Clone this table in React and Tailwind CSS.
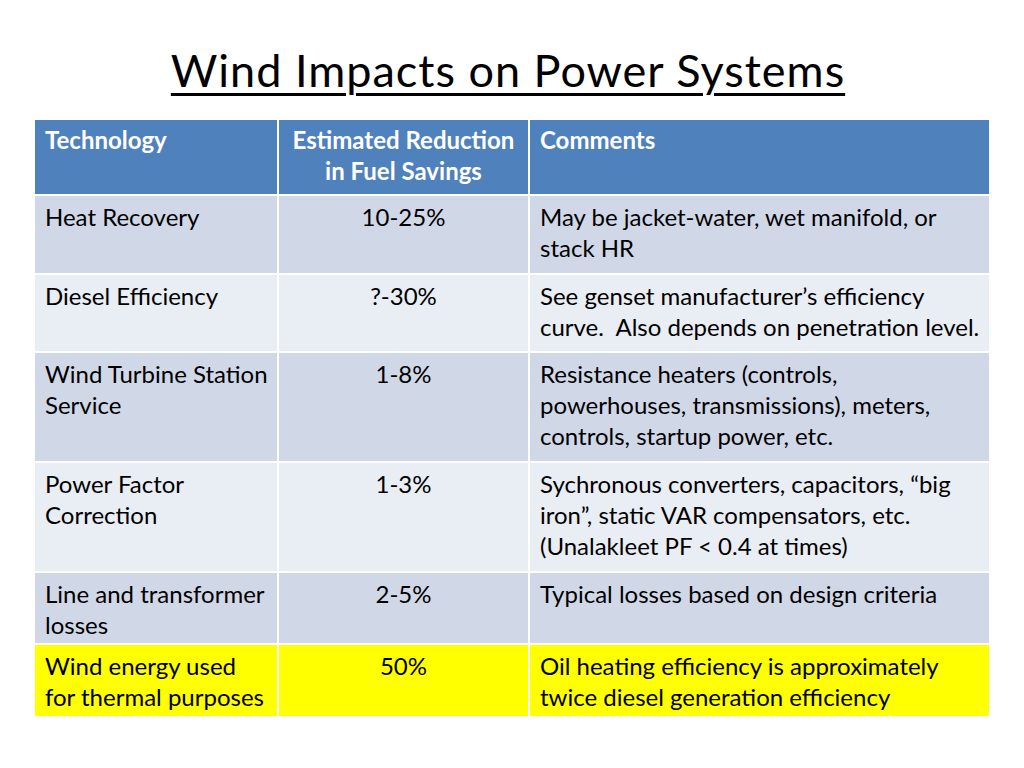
const rows = [
  {
    bg: 'bg-[#d0d8e8]',
    tech: ['Heat Recovery'],
    pct: '10-25%',
    note: ['May be jacket-water, wet manifold, or', 'stack HR'],
  },
  {
    bg: 'bg-[#e9edf4]',
    tech: ['Diesel Efficiency'],
    pct: '?-30%',
    note: ['See genset manufacturer’s efficiency', 'curve.\u00a0 Also depends on penetration level.'],
  },
  {
    bg: 'bg-[#d0d8e8]',
    tech: ['Wind Turbine Station', 'Service'],
    pct: '1-8%',
    note: ['Resistance heaters (controls,', 'powerhouses, transmissions), meters,', 'controls, startup power, etc.'],
  },
  {
    bg: 'bg-[#e9edf4]',
    tech: ['Power Factor', 'Correction'],
    pct: '1-3%',
    note: ['Sychronous converters, capacitors, “big', 'iron”, static VAR compensators, etc.', '(Unalakleet PF < 0.4 at times)'],
  },
  {
    bg: 'bg-[#d0d8e8]',
    tech: ['Line and transformer', 'losses'],
    pct: '2-5%',
    note: ['Typical losses based on design criteria'],
  },
  {
    bg: 'bg-[#ffff00]',
    tech: ['Wind energy used', 'for thermal purposes'],
    pct: '50%',
    note: ['Oil heating efficiency is approximately', 'twice diesel generation efficiency'],
  },
];

const Lines = ({ lines }) => (
  <>
    {lines.map((l) => (
      <div key={l} className="whitespace-nowrap">
        {l}
      </div>
    ))}
  </>
);

const App = () => {
  return (
    <div className="w-[1024px] h-[768px] bg-white font-['Lato',sans-serif] text-black overflow-hidden">
      {/* Title */}
      <div className="h-[120px] pt-[43px] pr-[8px] text-center">
        <h1 className="text-[45px] leading-[54px] tracking-[1px] underline decoration-[3px] underline-offset-[6px]">
          Wind Impacts on Power Systems
        </h1>
      </div>

      {/* Table */}
      <div className="ml-[35px] w-[954px] grid grid-cols-[242px_249px_459px] grid-rows-[74px_77px_76px_108px_108px_70px_71px] gap-[2px] text-[24px] leading-[31px]">
        <div className="bg-[#4f81bd] text-white font-bold px-[10px] pt-[4px]">Technology</div>
        <div className="bg-[#4f81bd] text-white font-bold px-[10px] pt-[4px] text-center">
          <Lines lines={['Estimated Reduction', 'in Fuel Savings']} />
        </div>
        <div className="bg-[#4f81bd] text-white font-bold px-[10px] pt-[4px]">Comments</div>

        {rows.map((r) => (
          <>
            <div key={r.pct + 'a'} className={`${r.bg} px-[10px] pt-[5px]`}>
              <Lines lines={r.tech} />
            </div>
            <div key={r.pct + 'b'} className={`${r.bg} px-[10px] pt-[5px] text-center`}>
              {r.pct}
            </div>
            <div key={r.pct + 'c'} className={`${r.bg} px-[10px] pt-[5px]`}>
              <Lines lines={r.note} />
            </div>
          </>
        ))}
      </div>
    </div>
  );
};

export default App;
